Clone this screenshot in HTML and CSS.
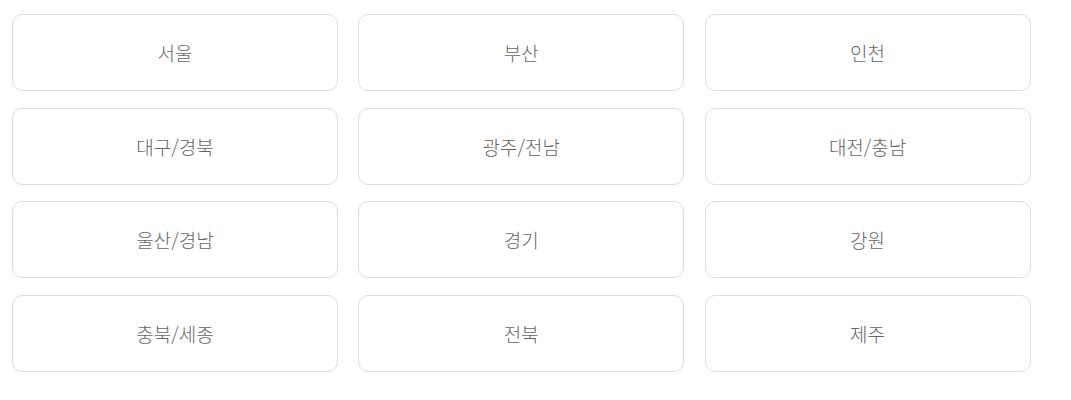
FILE: index.html
```html
<!DOCTYPE html>
<html lang="ko">
<head>
<meta charset="utf-8">
<link rel="stylesheet" href="styles.css">
</head>
<body>
<ul class="regions">
  <li><a class="region">서울</a></li>
  <li><a class="region">부산</a></li>
  <li><a class="region">인천</a></li>
  <li><a class="region">대구/경북</a></li>
  <li><a class="region">광주/전남</a></li>
  <li><a class="region">대전/충남</a></li>
  <li><a class="region">울산/경남</a></li>
  <li><a class="region">경기</a></li>
  <li><a class="region">강원</a></li>
  <li><a class="region">충북/세종</a></li>
  <li><a class="region">전북</a></li>
  <li><a class="region">제주</a></li>
</ul>
</body>
</html>
```
FILE: styles.css
```css
html, body {
  margin: 0;
  padding: 0;
  background: #fff;
}
body {
  font-family: "Noto Sans CJK KR", "Noto Sans", sans-serif;
}
.regions {
  list-style: none;
  margin: 0;
  padding: 14px 0 0 12px;
  display: grid;
  grid-template-columns: repeat(3, 326px);
  column-gap: 20.3px;
  row-gap: 16.6px;
}
.regions li {
  margin: 0;
  padding: 0;
}
.region {
  box-sizing: border-box;
  display: flex;
  align-items: center;
  justify-content: center;
  height: 77px;
  border: 1px solid #dcdcdc;
  border-radius: 10px;
  color: #666;
  font-size: 19px;
  font-weight: 300;
}
```
